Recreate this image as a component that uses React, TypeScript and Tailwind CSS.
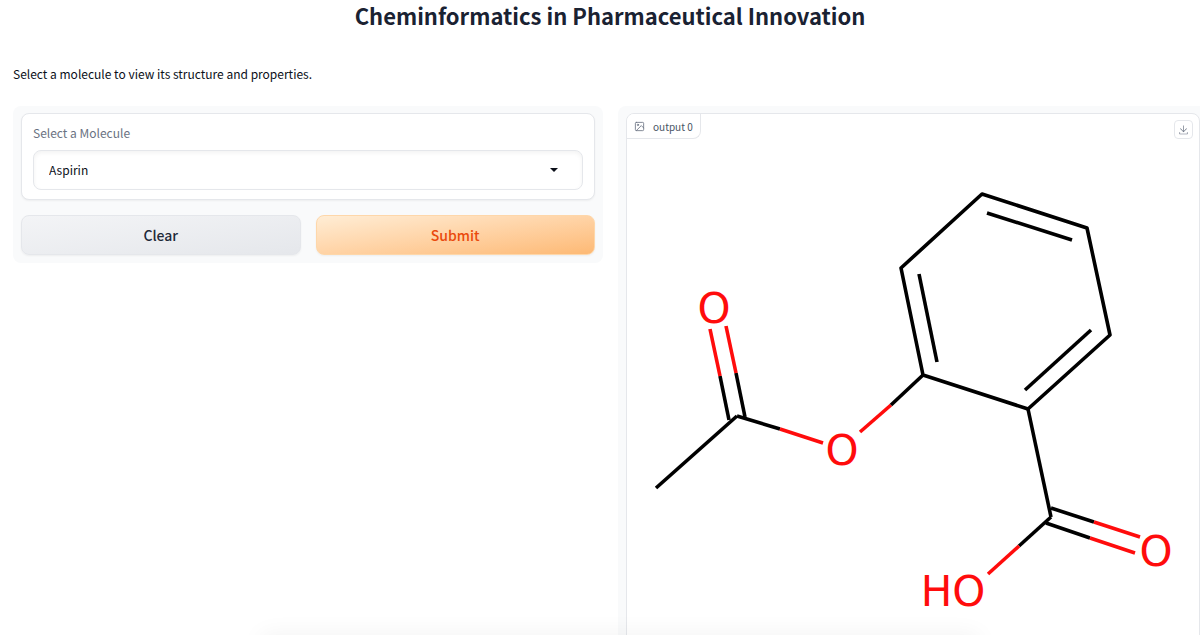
import { useState } from "react";

type Point = [number, number];
type Bond = { from: Point; to: Point; color: string };

const CARBON = "#000000";
const OXYGEN = "#ff0c0c";

const bonds: Bond[] = [
  { from: [656, 488], to: [737, 416], color: CARBON },
  { from: [737, 416], to: [780, 429], color: CARBON },
  { from: [780, 429], to: [823, 443], color: OXYGEN },
  { from: [729, 420], to: [720, 376], color: CARBON },
  { from: [720, 376], to: [710, 329], color: OXYGEN },
  { from: [745, 417], to: [736, 373], color: CARBON },
  { from: [736, 373], to: [726, 326], color: OXYGEN },
  { from: [860, 432], to: [891, 405], color: OXYGEN },
  { from: [891, 405], to: [923, 375], color: CARBON },
  { from: [937, 362], to: [919, 274], color: CARBON },
  { from: [987, 213], to: [1072, 240], color: CARBON },
  { from: [1091, 330], to: [1025, 390], color: CARBON },
  { from: [1028, 409], to: [1051, 517], color: CARBON },
  { from: [1051, 508], to: [1094, 522], color: CARBON },
  { from: [1094, 522], to: [1140, 537], color: OXYGEN },
  { from: [1046, 523], to: [1090, 538], color: CARBON },
  { from: [1090, 538], to: [1135, 553], color: OXYGEN },
  { from: [1051, 517], to: [1019, 546], color: CARBON },
  { from: [1019, 546], to: [988, 574], color: OXYGEN },
];

const atoms = [
  { label: "O", x: 714, y: 323 },
  { label: "O", x: 842, y: 465 },
  { label: "O", x: 1156, y: 566 },
  { label: "HO", x: 953, y: 606 },
];

function Molecule() {
  return (
    <svg viewBox="627 114 572 572" className="block w-full" role="img" aria-label="Structure of aspirin">
      <g strokeWidth="3.6" fill="none">
        <path
          d="M923 375 L901 268 L982 194 L1087 228 L1110 335 L1028 409 Z"
          stroke={CARBON}
          strokeLinejoin="round"
        />
        {bonds.map((b, i) => (
          <line key={i} x1={b.from[0]} y1={b.from[1]} x2={b.to[0]} y2={b.to[1]} stroke={b.color} />
        ))}
      </g>
      <g fill={OXYGEN} fontSize="42" textAnchor="middle" className="font-['DejaVu_Sans',sans-serif]">
        {atoms.map((a, i) => (
          <text key={i} x={a.x} y={a.y}>
            {a.label}
          </text>
        ))}
      </g>
    </svg>
  );
}

function ImageIcon() {
  return (
    <svg viewBox="0 0 24 24" className="size-[11px]" fill="none" stroke="currentColor" strokeWidth="1.8" strokeLinecap="round" strokeLinejoin="round" aria-hidden="true">
      <rect x="3" y="3" width="18" height="18" rx="2" />
      <circle cx="8.5" cy="8.5" r="1.5" />
      <path d="M5 21l11-11 5 5" />
    </svg>
  );
}

function DownloadIcon() {
  return (
    <svg viewBox="0 0 32 32" className="size-[11px]" fill="currentColor" aria-hidden="true">
      <path d="M26 24v4H6v-4H4v4a2 2 0 0 0 2 2h20a2 2 0 0 0 2-2v-4zm0-10l-1.41-1.41L17 20.17V4h-2v16.17l-7.59-7.58L6 14l10 10l10-10z" />
    </svg>
  );
}

export default function App() {
  const [molecule, setMolecule] = useState("Aspirin");

  return (
    <div className="relative h-screen overflow-hidden bg-white font-['Noto_Sans_CJK_SC',sans-serif] text-gray-800">
      <h1 className="pl-5 text-center text-[22px] leading-[30px] font-bold text-[#1a2232]">
        Cheminformatics in Pharmaceutical Innovation
      </h1>
      <p className="mt-[35px] pl-[13px] text-xs leading-[18px] text-[#0b0f19]">
        Select a molecule to view its structure and properties.
      </p>

      <div className="-mr-2 mt-[23px] grid grid-cols-2 items-start gap-[15px] pl-[13px]">
        <form
          className="rounded-lg bg-gray-50 p-2"
          onSubmit={(e) => e.preventDefault()}
          onReset={() => setMolecule("Aspirin")}
        >
          <div className="-mt-px rounded-lg border border-gray-200 bg-white px-[11px] pt-2.5 pb-[9px] shadow-xs">
            <label htmlFor="molecule" className="block text-xs leading-[18px] text-gray-500">
              Select a Molecule
            </label>
            <div className="relative mt-2">
              <select
                id="molecule"
                value={molecule}
                onChange={(e) => setMolecule(e.target.value)}
                className="block h-10 w-full appearance-none rounded-lg border border-gray-200 bg-white px-[15px] text-xs text-[#0b0f19] inset-shadow-sm"
              >
                <option>Aspirin</option>
              </select>
              <svg viewBox="0 0 8 4" className="pointer-events-none absolute top-[18px] right-[25px] h-1 w-2" fill="#0b0f19" aria-hidden="true">
                <path d="M0 0h8L4 4z" />
              </svg>
            </div>
          </div>
          <div className="mt-[15px] grid grid-cols-2 gap-[15px]">
            <button
              type="reset"
              className="h-10 rounded-lg border border-gray-200 bg-linear-to-br from-gray-100 to-gray-200 text-sm font-medium text-gray-800 shadow-xs"
            >
              Clear
            </button>
            <button
              type="submit"
              className="h-10 rounded-lg border border-[#fed7aa] bg-linear-to-br from-[#ffedd5] to-[#fdb974] text-sm font-medium text-[#ea4a0c] shadow-xs"
            >
              Submit
            </button>
          </div>
        </form>

        <section className="rounded-lg bg-gray-50 p-2" aria-label="Output">
          <div className="relative -mt-px overflow-hidden rounded-lg border border-gray-200 bg-white">
            <Molecule />
            <div className="absolute top-0 left-0 flex h-[25px] items-center gap-2 rounded-br-lg border-r border-b border-gray-200 bg-white px-[7px] text-[10px] text-gray-600">
              <span className="text-gray-500">
                <ImageIcon />
              </span>
              output 0
            </div>
            <button
              type="button"
              aria-label="Download"
              className="absolute top-[6px] right-[6px] flex size-[19px] items-center justify-center rounded border border-gray-200 bg-white text-gray-500"
            >
              <DownloadIcon />
            </button>
          </div>
        </section>
      </div>

      <div className="pointer-events-none absolute top-full right-[220px] left-[260px] h-5 rounded-lg shadow-[0_0_24px_rgba(0,0,0,0.06)]" />
    </div>
  );
}
